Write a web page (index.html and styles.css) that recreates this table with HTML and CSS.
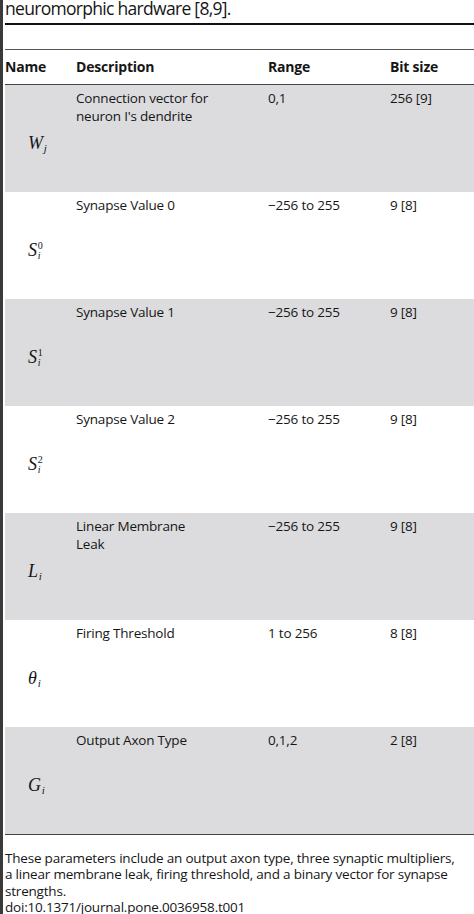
FILE: index.html
```html
<!DOCTYPE html>
<html>
<head>
<meta charset="utf-8">
<link rel="stylesheet" href="styles.css">
</head>
<body>
<div class="page">
  <p class="caption">neuromorphic hardware [8,9].</p>
  <div class="rule-thick"></div>
  <div class="table">
    <div class="row head">
      <div class="c">Name</div>
      <div class="c">Description</div>
      <div class="c">Range</div>
      <div class="c">Bit size</div>
    </div>
    <div class="row shade">
      <div class="c sym"><span class="m">W<sub class="lo">j</sub></span></div>
      <div class="c desc">Connection vector for neuron I's dendrite</div>
      <div class="c">0,1</div>
      <div class="c">256 [9]</div>
    </div>
    <div class="row">
      <div class="c sym"><span class="m">S<span class="stk"><span>0</span><span>i</span></span></span></div>
      <div class="c desc">Synapse Value 0</div>
      <div class="c">−256 to 255</div>
      <div class="c">9 [8]</div>
    </div>
    <div class="row shade">
      <div class="c sym"><span class="m">S<span class="stk"><span>1</span><span>i</span></span></span></div>
      <div class="c desc">Synapse Value 1</div>
      <div class="c">−256 to 255</div>
      <div class="c">9 [8]</div>
    </div>
    <div class="row">
      <div class="c sym"><span class="m">S<span class="stk"><span>2</span><span>i</span></span></span></div>
      <div class="c desc">Synapse Value 2</div>
      <div class="c">−256 to 255</div>
      <div class="c">9 [8]</div>
    </div>
    <div class="row shade">
      <div class="c sym"><span class="m">L<sub class="lo">i</sub></span></div>
      <div class="c desc">Linear Membrane Leak</div>
      <div class="c">−256 to 255</div>
      <div class="c">9 [8]</div>
    </div>
    <div class="row">
      <div class="c sym"><span class="m">θ<sub class="lo">i</sub></span></div>
      <div class="c desc">Firing Threshold</div>
      <div class="c">1 to 256</div>
      <div class="c">8 [8]</div>
    </div>
    <div class="row shade">
      <div class="c sym"><span class="m">G<sub class="lo">i</sub></span></div>
      <div class="c desc">Output Axon Type</div>
      <div class="c">0,1,2</div>
      <div class="c">2 [8]</div>
    </div>
  </div>
  <div class="foot">
    <p class="note">These parameters include an output axon type, three synaptic multipliers, a linear membrane leak, firing threshold, and a binary vector for synapse strengths.</p>
    <p class="doi">doi:10.1371/journal.pone.0036958.t001</p>
  </div>
</div>
</body>
</html>
```

FILE: styles.css
```css
html, body {
  margin: 0;
  padding: 0;
  background: #ffffff;
}

.page {
  height: 914px;
  overflow: hidden;
  border-left: 3px solid #3a3a3a;
  padding-left: 2px;
  box-sizing: border-box;
  font-family: "Open Sans", "Lato", sans-serif;
  color: #161616;
}

.caption {
  margin: -5px 0 0 0;
  font-size: 17.5px;
  line-height: 26px;
  letter-spacing: -0.7px;
}

.rule-thick {
  height: 2px;
  background: #111;
  margin-top: 2px;
}

.table {
  margin-top: 24px;
  border-top: 1px solid #555;
}

.row {
  display: grid;
  grid-template-columns: 71px 192px 122px 1fr;
  height: 107px;
  font-size: 13.5px;
  line-height: 18px;
  letter-spacing: -0.2px;
}

.row.head {
  height: 34px;
  font-weight: 700;
  align-items: center;
  border-bottom: 1px solid #444;
  font-size: 14px;
}

.row.head .c {
  padding-top: 0;
}

.shade {
  background: #dcdcde;
}

.c {
  padding-top: 4px;
}

.desc {
  max-width: 137px;
}

.sym {
  padding-top: 49px;
  padding-left: 23px;
}

.m {
  font-family: "Liberation Serif", serif;
  font-style: italic;
  font-size: 18px;
  display: inline-flex;
  align-items: flex-start;
}

.lo {
  font-size: 11px;
  line-height: 1;
  vertical-align: baseline;
  position: relative;
  top: 9px;
  margin-left: 1px;
}

.stk {
  display: inline-flex;
  flex-direction: column;
  font-size: 10px;
  line-height: 10px;
  margin-left: 1px;
}

.stk span:first-child {
  font-style: normal;
}

.foot {
  border-top: 1px solid #444;
  padding-top: 15px;
  font-size: 13.5px;
  line-height: 16.3px;
  letter-spacing: -0.2px;
}

.foot p {
  margin: 0;
}

.note {
  padding-right: 12px;
}
```
